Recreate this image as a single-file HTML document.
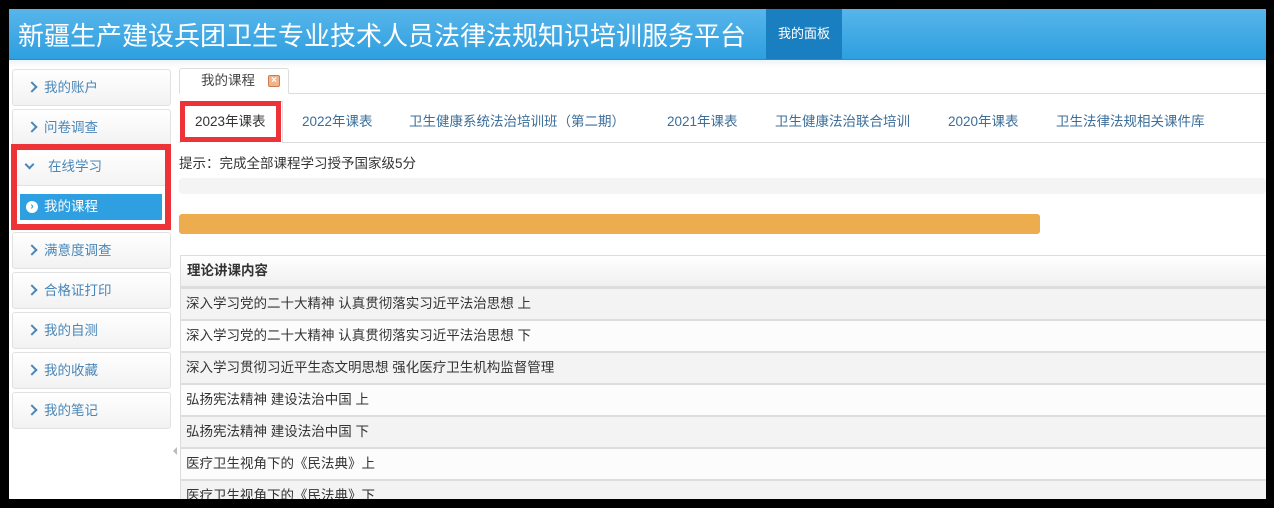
<!DOCTYPE html><html><head><meta charset="utf-8"><style>
*{margin:0;padding:0;box-sizing:border-box}
body{width:1274px;height:508px;background:#000;position:relative;overflow:hidden;font-family:"Liberation Sans","Noto Sans CJK SC",sans-serif;font-size:13.5px;color:#333}
.a{position:absolute}
#page{left:9px;top:9px;width:1257px;height:490px;background:#fff;overflow:hidden}
.hdr{left:0;top:0;width:1257px;height:51px;background:linear-gradient(#58b5ea,#2d9fe0);border-bottom:1px solid #2a8ccc}
.title{left:9px;top:7px;color:#fff;font-size:26px;white-space:nowrap}
.panel{left:757px;top:0;width:76px;height:50px;background:#1a7fc0;color:#fff;font-size:13px;line-height:50px;text-align:center}
.sd{left:3px;width:159px;height:37px;border:1px solid #e2e2e2;border-radius:3px;background:linear-gradient(#fff,#f2f2f2);color:#4a87b8;font-size:13.5px;line-height:35px;padding-left:31px}
.sd:before{content:"";position:absolute;left:15px;top:13px;width:6px;height:6px;border-right:2.5px solid #4a87b8;border-top:2.5px solid #4a87b8;transform:rotate(45deg)}
.row{left:171px;width:1090px;height:32px;border-bottom:2px solid #ddd;line-height:30px;padding-left:6px;font-size:13.5px;color:#333}
.tb{top:92px;font-size:13.5px;color:#3b6e9a;line-height:42px;white-space:nowrap}
</style></head><body>
<div id="page" class="a">
<div class="a hdr"></div>
<div class="a title">新疆生产建设兵团卫生专业技术人员法律法规知识培训服务平台</div>
<div class="a panel">我的面板</div>
<div class="a" style="left:0;top:51px;width:1257px;height:8px;background:linear-gradient(#eef3f6,#fff)"></div>

<div class="a sd" style="top:60px">我的账户</div>
<div class="a sd" style="top:100px">问卷调查</div>
<div class="a" style="left:2px;top:135px;width:160px;height:86px;border:6px solid #ee3338;background:#fff"></div>
<div class="a" style="left:8px;top:141px;width:148px;height:36px;background:linear-gradient(#fff,#f3f3f3);border-bottom:1px solid #e2e2e2;color:#4a87b8;line-height:34px;padding-left:31px;font-size:13.5px">在线学习</div>
<div class="a" style="left:17px;top:152px;width:7px;height:7px;border-right:2.5px solid #4a87b8;border-bottom:2.5px solid #4a87b8;transform:rotate(45deg)"></div>
<div class="a" style="left:11px;top:185px;width:142px;height:26px;background:#2e9fe0;color:#fff;line-height:26px;padding-left:24px;font-size:13.5px">我的课程</div>
<div class="a" style="left:17px;top:192px;width:12px;height:12px;border-radius:50%;background:#fff;color:#2e9fe0;font-size:10px;line-height:12px;text-align:center;font-weight:bold">›</div>
<div class="a sd" style="top:223px">满意度调查</div>
<div class="a sd" style="top:263px">合格证打印</div>
<div class="a sd" style="top:303px">我的自测</div>
<div class="a sd" style="top:343px">我的收藏</div>
<div class="a sd" style="top:383px">我的笔记</div>
<div class="a" style="left:164px;top:438px;width:0;height:0;border:4px solid transparent;border-right:4px solid #bbb;border-left:0"></div>

<div class="a" style="left:170px;top:84px;width:1087px;height:1px;background:#ddd"></div>
<div class="a" style="left:170px;top:59px;width:110px;height:26px;border:1px solid #ddd;border-bottom:1px solid #fff;border-radius:3px 3px 0 0;background:#fff;line-height:24px;padding-left:21px;font-size:13.5px;color:#444">我的课程</div>
<div class="a" style="left:259px;top:66px;width:12px;height:12px;background:#f0b48c;border:1px solid #d07a50;border-radius:2px;color:#fff;font-size:10px;line-height:10px;text-align:center;font-weight:bold">×</div>

<div class="a" style="left:170px;top:133px;width:1087px;height:1px;background:#ddd"></div>
<div class="a" style="left:171px;top:92px;width:103px;height:42px;border:1px solid #ddd;border-bottom:0;background:#fff"></div>
<div class="a" style="left:171px;top:92px;width:101px;height:41px;border:5px solid #ee3338"></div>
<div class="a tb" style="left:186px;color:#333">2023年课表</div>
<div class="a tb" style="left:293px">2022年课表</div>
<div class="a tb" style="left:400px">卫生健康系统法治培训班（第二期）</div>
<div class="a tb" style="left:658px">2021年课表</div>
<div class="a tb" style="left:766px">卫生健康法治联合培训</div>
<div class="a tb" style="left:939px">2020年课表</div>
<div class="a tb" style="left:1047px">卫生法律法规相关课件库</div>

<div class="a" style="left:170px;top:143px;font-size:13.5px;color:#333">提示：完成全部课程学习授予国家级5分</div>
<div class="a" style="left:170px;top:169px;width:1087px;height:16px;background:#f4f4f4;border-radius:4px"></div>
<div class="a" style="left:170px;top:205px;width:861px;height:20px;background:#edad4e;border-radius:3px"></div>

<div class="a" style="left:171px;top:246px;width:1090px;height:34px;border:1px solid #ddd;border-bottom:3px solid #ddd;background:linear-gradient(#fff,#f0f0f0);line-height:30px;padding-left:6px;font-weight:bold;font-size:13.5px">理论讲课内容</div>
<div class="a row" style="top:280px;background:#f3f3f3">深入学习党的二十大精神 认真贯彻落实习近平法治思想 上</div>
<div class="a row" style="top:312px;background:#fcfcfc">深入学习党的二十大精神 认真贯彻落实习近平法治思想 下</div>
<div class="a row" style="top:344px;background:#f3f3f3">深入学习贯彻习近平生态文明思想 强化医疗卫生机构监督管理</div>
<div class="a row" style="top:376px;background:#fcfcfc">弘扬宪法精神 建设法治中国 上</div>
<div class="a row" style="top:408px;background:#f3f3f3">弘扬宪法精神 建设法治中国 下</div>
<div class="a row" style="top:440px;background:#fcfcfc">医疗卫生视角下的《民法典》上</div>
<div class="a row" style="top:472px;background:#f3f3f3">医疗卫生视角下的《民法典》下</div>
<div class="a" style="left:171px;top:246px;width:1px;height:260px;background:#ddd"></div>
</div>
</body></html>
